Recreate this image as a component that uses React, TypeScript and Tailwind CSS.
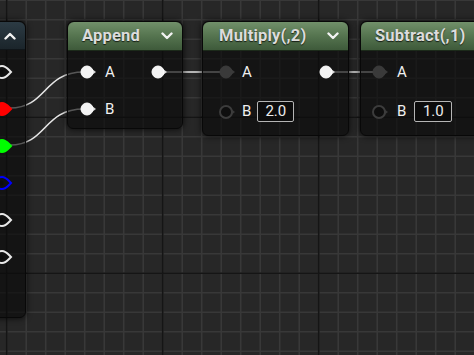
import React from "react";

const font = { fontFamily: "Roboto, 'Liberation Sans', sans-serif" };

const Chevron: React.FC<{ up?: boolean }> = ({ up }) => (
  <svg width="12" height="8" viewBox="0 0 12 8" className="shrink-0">
    <polyline
      points={up ? "1.5,6.5 6,2 10.5,6.5" : "1.5,1.5 6,6 10.5,1.5"}
      fill="none"
      stroke="#f2f2f2"
      strokeWidth="2.4"
      strokeLinecap="round"
      strokeLinejoin="round"
    />
  </svg>
);

// data pin: circle with a small arrow on its right
const Pin: React.FC<{ kind: "on" | "dim" | "ring" }> = ({ kind }) => {
  const fill = kind === "on" ? "#f4f4f4" : kind === "dim" ? "#3a3a3a" : "#0e0e0e";
  const stroke = kind === "on" ? "#ffffff" : "#3c3c3c";
  const arrow = kind === "on" ? "#d8d8d8" : "#3a3a3a";
  return (
    <svg width="17" height="14" viewBox="0 0 17 14" className="shrink-0">
      <polygon points="12,4 16,7 12,10" fill={arrow} />
      <circle cx="7" cy="7" r="6" fill={fill} stroke={stroke} strokeWidth={kind === "ring" ? 2 : 1} />
    </svg>
  );
};

const SidePin: React.FC<{ color: string; filled: boolean }> = ({ color, filled }) => (
  <svg width="16" height="14" viewBox="0 0 16 14" className="shrink-0">
    <path
      d="M-2,7 C-2,2.5 1,1 5,1 C9,1 10.5,3.5 14,7 C10.5,10.5 9,13 5,13 C1,13 -2,11.5 -2,7 Z"
      fill={filled ? color : "#101010"}
      stroke={color}
      strokeWidth="2"
    />
    {!filled && <circle cx="4" cy="7" r="2.4" fill="#0c0c0c" />}
  </svg>
);

const ValueBox: React.FC<{ v: string; w: string }> = ({ v, w }) => (
  <div className={`${w} h-[21px] border border-[#b5b5b5] bg-[#0c0c0c] rounded-[2px] flex items-center justify-center text-[15px] text-[#ececec]`}>
    {v}
  </div>
);

const Header: React.FC<{ title: string; pl: string; pr: string }> = ({ title, pl, pr }) => (
  <div
    className={`h-[29px] rounded-t-[6px] bg-gradient-to-b from-[#71906a] via-[#55744f] to-[#3e5a3a] border-b border-[#1c2a1a] flex items-center justify-between ${pl} ${pr}`}
  >
    <span className="text-[16.5px] font-bold text-[#dcdcdc] tracking-[0.2px] [text-shadow:0_1px_1px_rgba(0,0,0,0.7)] whitespace-nowrap">
      {title}
    </span>
    <Chevron />
  </div>
);

export default function App() {
  const minorX = Array.from({ length: 25 }, (_, i) => 6.7 + i * 19.5);
  const minorY = Array.from({ length: 19 }, (_, i) => 0.3 + i * 19.5);
  const majorX = [6.7, 162.7, 318.7];
  const majorY = [117.3, 273.3];

  return (
    <div className="relative w-[474px] h-[355px] overflow-hidden bg-[#272727]" style={font}>
      {/* grid + wires */}
      <svg className="absolute inset-0" width="474" height="355">
        {minorX.map((x) => (
          <line key={"mx" + x} x1={x} y1="0" x2={x} y2="355" stroke="#383838" strokeWidth="1.6" />
        ))}
        {minorY.map((y) => (
          <line key={"my" + y} x1="0" y1={y} x2="474" y2={y} stroke="#383838" strokeWidth="1.6" />
        ))}
        {majorX.map((x) => (
          <line key={"Mx" + x} x1={x} y1="0" x2={x} y2="355" stroke="#151515" strokeWidth="1.6" />
        ))}
        {majorY.map((y) => (
          <line key={"My" + y} x1="0" y1={y} x2="474" y2={y} stroke="#151515" strokeWidth="1.6" />
        ))}
        <g fill="none" stroke="#e6e6e6" strokeWidth="1.6">
          <path d="M10,108 C47,108 43,72 84,72" />
          <path d="M10,145 C47,145 43,109 84,109" />
          <path d="M160,72 L224,72" />
          <path d="M328,72 L378,72" />
        </g>
      </svg>

      {/* left, partly hidden node */}
      <div className="absolute left-[-110px] top-[21px] w-[136px] h-[297px] rounded-[6px] border border-[#080808] bg-[rgba(10,10,10,0.66)] shadow-[0_0_6px_rgba(0,0,0,0.8)] flex flex-col">
        <div className="h-[28px] rounded-t-[6px] bg-gradient-to-b from-[#2c3b44] to-[#1b252b] border-b border-[#10161a] flex items-center justify-end pr-[9px]">
          <Chevron up />
        </div>
        <div className="flex flex-col items-end pr-[12px] pt-[15px] gap-[23px]">
          <SidePin color="#e8e8e8" filled={false} />
          <SidePin color="#ff0000" filled />
          <SidePin color="#00ff00" filled />
          <SidePin color="#0000ff" filled={false} />
          <SidePin color="#e8e8e8" filled={false} />
          <SidePin color="#e8e8e8" filled={false} />
        </div>
      </div>

      {/* Append */}
      <div className="absolute left-[67px] top-[21px] w-[116px] h-[108px] rounded-[6px] border border-[#080808] bg-[rgba(10,10,10,0.66)] shadow-[0_0_6px_rgba(0,0,0,0.8)] flex flex-col">
        <Header title="Append" pl="pl-[14px]" pr="pr-[9px]" />
        <div className="flex flex-col pl-[12px] pr-[14px] pt-[14px] gap-[23px] text-[15px] text-[#f0f0f0]">
          <div className="h-[14px] flex items-center justify-between">
            <div className="flex items-center gap-[8px]">
              <Pin kind="on" />
              <span>A</span>
            </div>
            <Pin kind="on" />
          </div>
          <div className="h-[14px] flex items-center gap-[8px]">
            <Pin kind="on" />
            <span>B</span>
          </div>
        </div>
      </div>

      {/* Multiply */}
      <div className="absolute left-[202px] top-[21px] w-[147px] h-[115px] rounded-[6px] border border-[#080808] bg-[rgba(10,10,10,0.66)] shadow-[0_0_6px_rgba(0,0,0,0.8)] flex flex-col">
        <Header title="Multiply(,2)" pl="pl-[16px]" pr="pr-[9px]" />
        <div className="flex flex-col pl-[16px] pr-[12px] pt-[14px] gap-[22px] text-[15px] text-[#f0f0f0]">
          <div className="h-[14px] flex items-center justify-between">
            <div className="flex items-center gap-[6px]">
              <Pin kind="dim" />
              <span>A</span>
            </div>
            <Pin kind="on" />
          </div>
          <div className="h-[21px] flex items-center gap-[6px]">
            <Pin kind="ring" />
            <span>B</span>
            <ValueBox v="2.0" w="w-[37px]" />
          </div>
        </div>
      </div>

      {/* Subtract */}
      <div className="absolute left-[360px] top-[21px] w-[140px] h-[115px] rounded-[6px] border border-[#080808] bg-[rgba(10,10,10,0.66)] shadow-[0_0_6px_rgba(0,0,0,0.8)] flex flex-col">
        <Header title="Subtract(,1)" pl="pl-[14px]" pr="pr-[9px]" />
        <div className="flex flex-col pl-[11px] pt-[14px] gap-[22px] text-[15px] text-[#f0f0f0]">
          <div className="h-[14px] flex items-center gap-[8px]">
            <Pin kind="dim" />
            <span>A</span>
          </div>
          <div className="h-[21px] flex items-center gap-[8px]">
            <Pin kind="ring" />
            <span>B</span>
            <ValueBox v="1.0" w="w-[38px]" />
          </div>
        </div>
      </div>
    </div>
  );
}
